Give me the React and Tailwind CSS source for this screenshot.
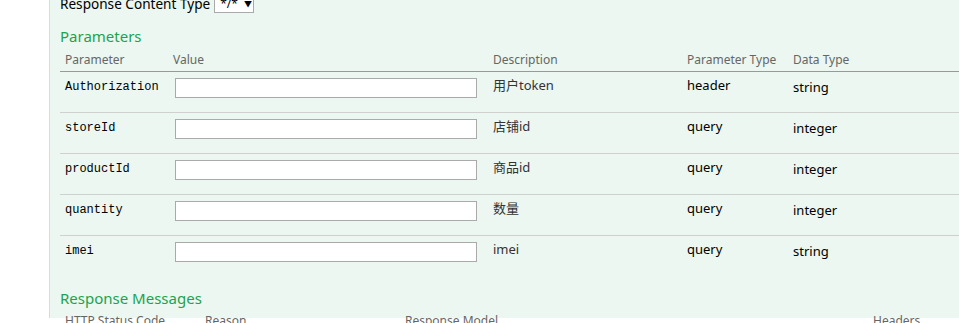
import React from "react";

const params = [
  { name: "Authorization", desc: "用户token", kind: "header", type: "string" },
  { name: "storeId", desc: "店铺id", kind: "query", type: "integer" },
  { name: "productId", desc: "商品id", kind: "query", type: "integer" },
  { name: "quantity", desc: "数量", kind: "query", type: "integer" },
  { name: "imei", desc: "imei", kind: "query", type: "string" },
];

const sans = "font-['Noto_Sans','Open_Sans','Noto_Sans_CJK_SC',sans-serif]";

export default function App() {
  return (
    <div className={`h-[323px] w-[959px] overflow-hidden bg-white ${sans}`}>
      <div className="ml-[49px] h-full border-l border-[#c3e8d1] bg-[#ebf7f0] pl-[10px]">
        <div className="-mt-[5px] flex items-center gap-[4px] text-[13.6px] leading-[18px] text-[#000]">
          <span>Response Content Type</span>
          <span className="flex h-[18px] w-[40px] items-center gap-[6px] border border-[#aaa] bg-white px-[5px] text-[12px]">
            <span>*/*</span>
            <span className="text-[8px]">▼</span>
          </span>
        </div>

        <h4 className="mt-[13px] text-[15px] leading-[20px] text-[#1ba34f]">Parameters</h4>

        <div className="mt-[2px]">
          <div className="flex h-[24px] items-center border-b border-[#999] text-[12px] text-[#666]">
            <div className="w-[108px] pl-[5px]">Parameter</div>
            <div className="w-[320px] pl-[5px]">Value</div>
            <div className="w-[194px] pl-[5px]">Description</div>
            <div className="w-[106px] pl-[5px]">Parameter Type</div>
            <div className="flex-1 pl-[5px]">Data Type</div>
          </div>
          {params.map((p, i) => (
            <div
              key={p.name}
              className={`flex h-[41px] items-start ${i < params.length - 1 ? "border-b border-[#d0d0d0]" : ""}`}
            >
              <div className="w-[108px] pl-[5px] pt-[8px] font-['Liberation_Mono',monospace] text-[12px] leading-[15px] text-[#000]">
                {p.name}
              </div>
              <div className="w-[320px] pl-[7px] pt-[6px]">
                <div className="h-[20px] w-[302px] border border-[#aaa] bg-white" />
              </div>
              <div className="w-[194px] pl-[5px] pt-[4px] text-[13px] leading-[18px] text-[#333]">{p.desc}</div>
              <div className="w-[106px] pl-[5px] pt-[4px] text-[13px] leading-[18px] text-[#000]">{p.kind}</div>
              <div className="flex-1 pl-[5px] pt-[6px] text-[13px] leading-[18px] text-[#000]">{p.type}</div>
            </div>
          ))}
        </div>

        <h4 className="mt-[11px] text-[15px] leading-[20px] text-[#1ba34f]">Response Messages</h4>

        <div className="mt-[1px] flex h-[24px] items-center text-[12px] text-[#666]">
          <div className="w-[140px] pl-[5px]">HTTP Status Code</div>
          <div className="w-[200px] pl-[5px]">Reason</div>
          <div className="w-[468px] pl-[5px]">Response Model</div>
          <div className="flex-1 pl-[5px]">Headers</div>
        </div>
      </div>
    </div>
  );
}
